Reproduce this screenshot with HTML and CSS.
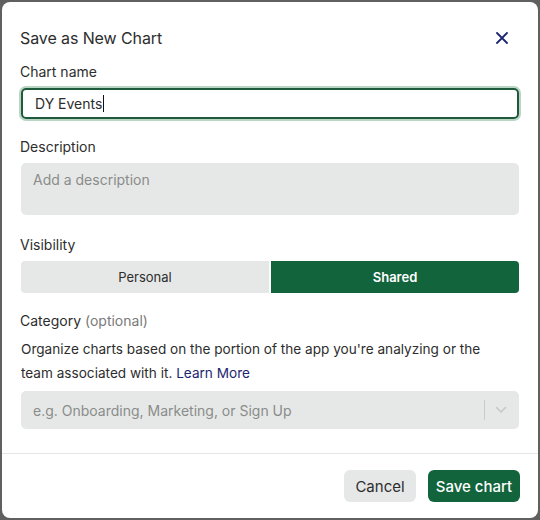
FILE: index.html
```html
<!DOCTYPE html>
<html>
<head>
<meta charset="utf-8">
<link rel="stylesheet" href="styles.css">
</head>
<body>
<div class="dialog">
  <div class="content">
    <div class="header">
      <h1 class="title">Save as New Chart</h1>
      <button class="close" aria-label="Close">
        <svg width="12" height="12" viewBox="0 0 12 12"><path d="M1 1L11 11M11 1L1 11" stroke="#1d2670" stroke-width="1.8" stroke-linecap="round"/></svg>
      </button>
    </div>
    <label class="label">Chart name</label>
    <div class="input focused"><span>DY Events</span><span class="caret"></span></div>
    <label class="label mt">Description</label>
    <div class="textarea">Add a description</div>
    <label class="label mt2">Visibility</label>
    <div class="segmented">
      <div class="seg">Personal</div>
      <div class="seg active">Shared</div>
    </div>
    <label class="label mt3">Category <span class="optional">(optional)</span></label>
    <p class="help">Organize charts based on the portion of the app you're analyzing or the team associated with it. <a class="link">Learn More</a></p>
    <div class="select">
      <span class="ph">e.g. Onboarding, Marketing, or Sign Up</span>
      <span class="sep"></span>
      <svg class="chev" width="12" height="8" viewBox="0 0 12 8"><path d="M1.5 1.5L6 6L10.5 1.5" fill="none" stroke="#c7c9c8" stroke-width="1.6" stroke-linecap="round" stroke-linejoin="round"/></svg>
    </div>
  </div>
  <div class="footer">
    <button class="btn cancel">Cancel</button>
    <button class="btn save">Save chart</button>
  </div>
</div>
</body>
</html>
```
FILE: styles.css
```css
html, body {
  margin: 0;
  padding: 0;
  background: #606060;
}
body {
  padding: 2px;
  font-family: "Inter", "Liberation Sans", sans-serif;
  color: #2f2f2f;
}
.dialog {
  background: #fff;
  border-radius: 8px;
  width: 536px;
  height: 516px;
  display: flex;
  flex-direction: column;
  box-sizing: border-box;
}
.content {
  padding: 18px 18px 0 18px;
  display: flex;
  flex-direction: column;
}
.header {
  display: flex;
  align-items: center;
  justify-content: space-between;
  height: 36px;
}
.title {
  margin: 0;
  font-size: 16px;
  font-weight: 400;
  color: #2d2d2d;
  letter-spacing: -0.1px;
}
.close {
  border: 0;
  background: none;
  padding: 0;
  width: 14px;
  height: 14px;
  margin-right: 11px;
  display: flex;
  align-items: center;
  justify-content: center;
}
.label {
  display: block;
  font-size: 14px;
  line-height: 20px;
  color: #2d2d2d;
  margin-top: 6px;
  margin-bottom: 6px;
}
.mt { margin-top: 18px; }
.mt2 { margin-top: 20px; }
.mt3 { margin-top: 18px; }
.optional { color: #7a7a7a; }
.input {
  height: 31px;
  border: 2px solid #1f5a3c;
  border-radius: 5px;
  box-shadow: 0 0 0 2px #b9d6c5;
  display: flex;
  align-items: center;
  padding: 0 12px;
  font-size: 14px;
  color: #2d2d2d;
  box-sizing: border-box;
  margin: 0 1px;
}
.caret {
  display: inline-block;
  width: 1px;
  height: 17px;
  background: #111;
  margin-left: 1px;
}
.textarea {
  height: 52px;
  background: #e6e8e7;
  border-radius: 5px;
  padding: 8px 12px;
  box-sizing: border-box;
  font-size: 14px;
  color: #8a8c8b;
  margin: 0 1px;
}
.segmented {
  display: flex;
  gap: 2px;
  margin: 0 1px;
  height: 32px;
}
.seg {
  flex: 1;
  display: flex;
  align-items: center;
  justify-content: center;
  font-size: 13px;
  background: #e6e8e7;
  color: #2d2d2d;
  border-radius: 4px 0 0 4px;
}
.seg.active {
  background: #12643c;
  color: #fff;
  border-radius: 0 4px 4px 0;
  font-weight: 600;
}
.help {
  margin: 0 0 0 1px;
  max-width: 470px;
  font-size: 13.6px;
  line-height: 24px;
  color: #2d2d2d;
}
.link { color: #1d2670; }
.select {
  margin: 6px 1px 0 1px;
  height: 38px;
  background: #e6e8e7;
  border-radius: 5px;
  display: flex;
  align-items: center;
  padding: 0 12px;
  font-size: 14px;
  color: #8a8c8b;
}
.ph { flex: 1; }
.sep {
  width: 1px;
  height: 20px;
  background: #c9cbca;
  margin-right: 10px;
}
.chev { margin-right: 0; }
.footer {
  margin-top: auto;
  border-top: 1px solid #e4e4e4;
  height: 65px;
  display: flex;
  align-items: center;
  justify-content: flex-end;
  gap: 12px;
  padding: 0 18px 0 0;
  box-sizing: border-box;
}
.btn {
  border: 0;
  border-radius: 6px;
  height: 32px;
  padding: 0;
  white-space: nowrap;
  font-family: "Inter", "Liberation Sans", sans-serif;
  font-size: 15px;
}
.cancel {
  background: #e6e8e7;
  color: #2d2d2d;
  width: 72px;
}
.save {
  background: #12643c;
  color: #fff;
  width: 92px;
  font-weight: 500;
}
```
